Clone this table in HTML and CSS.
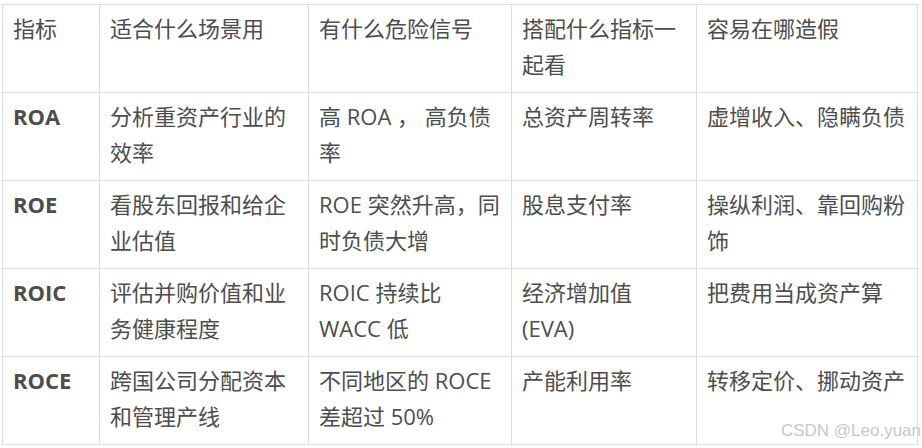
FILE: index.html
```html
<!DOCTYPE html>
<html lang="zh-CN">
<head>
<meta charset="utf-8">
<title>指标对比</title>
<link rel="stylesheet" href="styles.css">
</head>
<body>
<div class="page">
  <table class="metrics">
    <colgroup>
      <col class="c1"><col class="c2"><col class="c3"><col class="c4"><col class="c5">
    </colgroup>
    <thead>
      <tr>
        <th>指标</th>
        <th>适合什么场景用</th>
        <th>有什么危险信号</th>
        <th>搭配什么指标一起看</th>
        <th>容易在哪造假</th>
      </tr>
    </thead>
    <tbody>
      <tr>
        <td class="name">ROA</td>
        <td>分析重资产行业的效率</td>
        <td>高 ROA ， 高负债率</td>
        <td>总资产周转率</td>
        <td>虚增收入、隐瞒负债</td>
      </tr>
      <tr>
        <td class="name">ROE</td>
        <td>看股东回报和给企业估值</td>
        <td>ROE 突然升高，同时负债大增</td>
        <td>股息支付率</td>
        <td>操纵利润、靠回购粉饰</td>
      </tr>
      <tr>
        <td class="name">ROIC</td>
        <td>评估并购价值和业务健康程度</td>
        <td>ROIC 持续比 WACC 低</td>
        <td>经济增加值 (EVA)</td>
        <td>把费用当成资产算</td>
      </tr>
      <tr>
        <td class="name">ROCE</td>
        <td>跨国公司分配资本和管理产线</td>
        <td>不同地区的 ROCE 差超过 50%</td>
        <td>产能利用率</td>
        <td>转移定价、挪动资产</td>
      </tr>
    </tbody>
  </table>
  <div class="watermark">CSDN @Leo.yuan</div>
</div>
</body>
</html>
```

FILE: styles.css
```css
html, body {
  margin: 0;
  padding: 0;
  background: #ffffff;
}

.page {
  position: relative;
  width: 922px;
  height: 448px;
  padding: 4px 0 0 2px;
  box-sizing: border-box;
  overflow: hidden;
}

.metrics {
  border-collapse: collapse;
  table-layout: fixed;
  width: 915px;
  font-family: "Open Sans", "Noto Sans CJK SC", sans-serif;
  font-size: 22px;
  line-height: 36px;
  color: #4d4d4d;
}

.c1 { width: 97px; }
.c2 { width: 209px; }
.c3 { width: 203px; }
.c4 { width: 185px; }
.c5 { width: 221px; }

.metrics th,
.metrics td {
  border: 1px solid #dddddd;
  padding: 5px 10px 10px 10px;
  text-align: left;
  vertical-align: top;
  font-weight: normal;
  height: 72px;
  box-sizing: content-box;
}

.metrics td.name {
  font-weight: bold;
}

.watermark {
  position: absolute;
  right: 1px;
  bottom: 7px;
  font-family: "Liberation Sans", Arial, sans-serif;
  font-size: 17px;
  line-height: 20px;
  color: #c8c8c8;
  white-space: nowrap;
}
```
